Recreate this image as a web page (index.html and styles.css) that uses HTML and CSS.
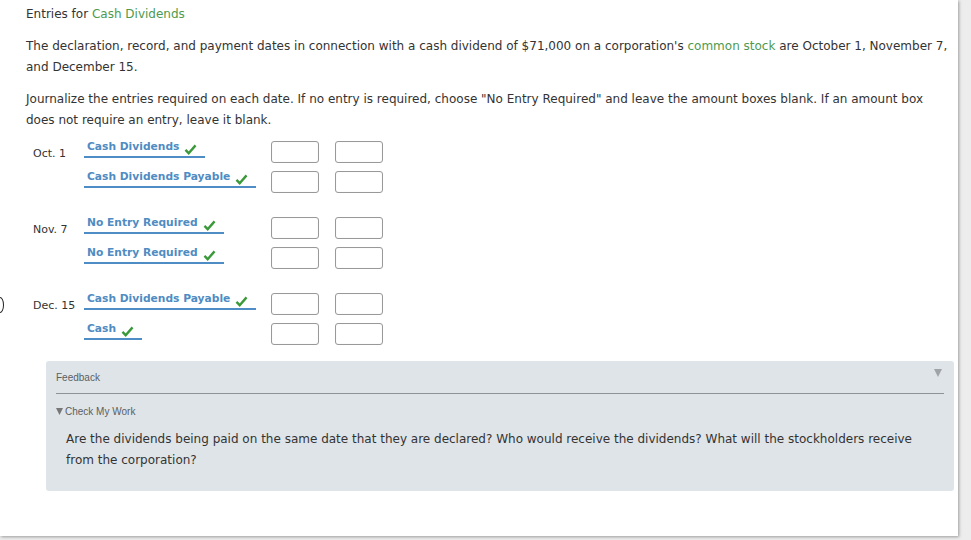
FILE: index.html
```html
<!DOCTYPE html>
<html>
<head>
<meta charset="utf-8">
<link rel="stylesheet" href="styles.css">
</head>
<body>
<div class="page">
  <div class="content">
    <div class="title">Entries for <span class="green">Cash Dividends</span></div>
    <p class="para">The declaration, record, and payment dates in connection with a cash dividend of $71,000 on a corporation's <span class="green">common stock</span> are October 1, November 7, and December 15.</p>
    <p class="para para2">Journalize the entries required on each date. If no entry is required, choose "No Entry Required" and leave the amount boxes blank. If an amount box does not require an entry, leave it blank.</p>

    <div class="journal">
      <div class="group">
        <div class="row">
          <div class="date">Oct. 1</div>
          <div class="acct"><span class="sel">Cash Dividends<svg class="chk" viewBox="0 0 14 12"><path d="M1.5 6.5 L5 10 L12.5 1.5" /></svg></span></div>
          <div class="box"></div><div class="box"></div>
        </div>
        <div class="row">
          <div class="date"></div>
          <div class="acct"><span class="sel">Cash Dividends Payable<svg class="chk" viewBox="0 0 14 12"><path d="M1.5 6.5 L5 10 L12.5 1.5" /></svg></span></div>
          <div class="box"></div><div class="box"></div>
        </div>
      </div>
      <div class="group">
        <div class="row">
          <div class="date">Nov. 7</div>
          <div class="acct"><span class="sel">No Entry Required<svg class="chk" viewBox="0 0 14 12"><path d="M1.5 6.5 L5 10 L12.5 1.5" /></svg></span></div>
          <div class="box"></div><div class="box"></div>
        </div>
        <div class="row">
          <div class="date"></div>
          <div class="acct"><span class="sel">No Entry Required<svg class="chk" viewBox="0 0 14 12"><path d="M1.5 6.5 L5 10 L12.5 1.5" /></svg></span></div>
          <div class="box"></div><div class="box"></div>
        </div>
      </div>
      <div class="group">
        <div class="row">
          <div class="date">Dec. 15</div>
          <div class="acct"><span class="sel">Cash Dividends Payable<svg class="chk" viewBox="0 0 14 12"><path d="M1.5 6.5 L5 10 L12.5 1.5" /></svg></span></div>
          <div class="box"></div><div class="box"></div>
        </div>
        <div class="row">
          <div class="date"></div>
          <div class="acct"><span class="sel">Cash<svg class="chk" viewBox="0 0 14 12"><path d="M1.5 6.5 L5 10 L12.5 1.5" /></svg></span></div>
          <div class="box"></div><div class="box"></div>
        </div>
      </div>
    </div>

    <div class="feedback">
      <div class="fb-head"><span class="fb-title">Feedback</span><svg class="fb-tri" viewBox="0 0 8 8"><path d="M0 0 H8 L4 8 Z"/></svg></div>
      <div class="fb-sub"><svg class="small-tri" viewBox="0 0 8 8"><path d="M0 0 H8 L4 8 Z"/></svg>Check My Work</div>
      <p class="fb-text">Are the dividends being paid on the same date that they are declared? Who would receive the dividends? What will the stockholders receive from the corporation?</p>
    </div>
  </div>
</div>
<div class="edge-mark"></div>
</body>
</html>
```
FILE: styles.css
```css
html, body {
  margin: 0;
  padding: 0;
}
body {
  background: #ededed;
  width: 971px;
  height: 540px;
  overflow: hidden;
  font-family: "DejaVu Sans", Verdana, sans-serif;
  color: #333;
  position: relative;
}
.page {
  width: 958px;
  height: 536px;
  background: #fff;
  box-shadow: 1px 1px 3px rgba(0,0,0,0.35);
}
.content {
  padding: 7px 0 0 26px;
  font-size: 12px;
}
.title {
  line-height: 15px;
}
.green {
  color: #4e9a4e;
}
.para {
  margin: 13.5px 0 0 0;
  line-height: 21px;
  width: 926px;
}
.para2 {
  margin-top: 11px;
}
.journal {
  margin-top: 6.5px;
}
.group + .group {
  margin-top: 16px;
}
.row {
  display: flex;
  align-items: center;
  height: 30px;
}
.date {
  width: 58px;
  padding-left: 7px;
  box-sizing: border-box;
  font-size: 11px;
  color: #333;
  padding-top: 2px;
}
.acct {
  width: 187px;
  align-self: stretch;
  display: flex;
  align-items: flex-start;
  padding-top: 3px;
  box-sizing: border-box;
}
.sel {
  display: inline-flex;
  align-items: flex-end;
  font-weight: bold;
  color: #4f8cc2;
  font-size: 10.7px;
  padding: 0 8px 2px 3px;
  border-bottom: 2px solid #4d8cc4;
  line-height: 14px;
}
.chk {
  width: 13px;
  height: 11px;
  margin-left: 5px;
  margin-bottom: -1px;
  fill: none;
  stroke: #3a9a3a;
  stroke-width: 2.6;
}
.box {
  width: 46px;
  height: 20px;
  border: 1px solid #999;
  border-radius: 3px;
  box-shadow: inset 0 0 1px rgba(0,0,0,0.15);
  background: #fff;
  margin-right: 16px;
}
.feedback {
  margin: 12px 0 0 20px;
  width: 908px;
  height: 130px;
  background: #dfe4e8;
  border-radius: 3px;
  box-sizing: border-box;
  padding: 0 10px;
}
.fb-head {
  display: flex;
  justify-content: space-between;
  align-items: center;
  height: 33px;
  border-bottom: 1px solid #8f9294;
  font-family: "Liberation Sans", Arial, sans-serif;
  font-size: 10px;
  color: #5a5f63;
  box-sizing: border-box;
}
.fb-tri {
  width: 8px;
  height: 8px;
  fill: #a0a4a8;
  margin-right: 2px;
  margin-top: -8px;
}
.fb-sub {
  font-family: "Liberation Sans", Arial, sans-serif;
  font-size: 10px;
  line-height: 12px;
  color: #5a5f63;
  margin-top: 12px;
  display: flex;
  align-items: center;
}
.small-tri {
  width: 7px;
  height: 7px;
  fill: #777;
  margin-right: 2px;
  margin-top: -2px;
}
.fb-text {
  margin: 10.5px 0 0 10px;
  line-height: 21px;
  font-size: 12px;
  color: #333;
  width: 860px;
}
.edge-mark {
  position: absolute;
  left: -4px;
  top: 297px;
  width: 6px;
  height: 14px;
  border: 1px solid #222;
  border-radius: 50%;
}
```
